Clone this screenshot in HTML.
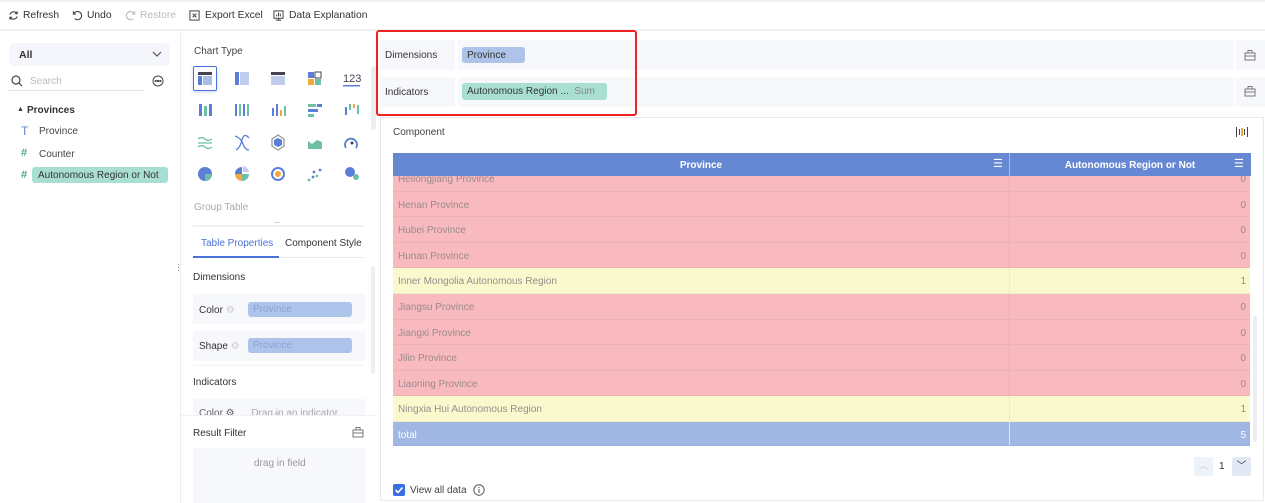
<!DOCTYPE html>
<html><head><meta charset="utf-8"><style>
*{box-sizing:border-box;margin:0;padding:0}
body{width:1265px;height:503px;overflow:hidden;background:#fff;font-family:"Liberation Sans",sans-serif;font-size:10px;color:#333;position:relative}
.a{position:absolute}
.tb span{position:absolute;top:10px;font-size:10.3px;color:#333}
.row{position:absolute;left:393px;width:857px;height:25.6px;border-bottom:1px solid rgba(0,0,0,0.04)}
.row .l{position:absolute;left:5px;top:8px;color:#9a8b8c;font-size:10px}
.row .r{position:absolute;right:4px;top:8px;color:#9a8b8c;font-size:10px}
.row .d{position:absolute;left:616px;top:0;bottom:0;border-left:1px solid rgba(0,0,0,0.05)}
.pk{background:#f8babe}.yl{background:#f9f9cd}
</style></head><body>
<div class="a" style="left:0;top:0;width:1265px;height:2px;background:#f0f1f4"></div>
<div class="a" style="left:0;top:29px;width:1265px;height:2px;background:#f0f1f4"></div>
<div class="tb">
<svg class="a" style="left:8px;top:10px" width="11" height="11" viewBox="0 0 12 12" fill="none" stroke="#444" stroke-width="1.2"><path d="M10 4A4.5 4.5 0 0 0 2 5M2 8a4.5 4.5 0 0 0 8-1"/><path d="M10 1.5V4H7.5M2 10.5V8h2.5"/></svg>
<span style="left:23px">Refresh</span>
<svg class="a" style="left:72px;top:10px" width="11" height="11" viewBox="0 0 12 12" fill="none" stroke="#444" stroke-width="1.2"><path d="M1.5 1.5v3h3M1.8 4.5A4.5 4.5 0 1 1 3 9.5"/></svg>
<span style="left:87px">Undo</span>
<svg class="a" style="left:125px;top:10px" width="11" height="11" viewBox="0 0 12 12" fill="none" stroke="#bbb" stroke-width="1.2"><path d="M10.5 1.5v3h-3M10.2 4.5A4.5 4.5 0 1 0 9 9.5"/></svg>
<span style="left:140px;color:#bbb">Restore</span>
<svg class="a" style="left:189px;top:10px" width="11" height="11" viewBox="0 0 12 12" fill="none" stroke="#444" stroke-width="1.1"><rect x="1" y="1" width="10" height="10"/><path d="M4 4l4 4M8 4l-4 4"/></svg>
<span style="left:205px">Export Excel</span>
<svg class="a" style="left:273px;top:10px" width="11" height="11" viewBox="0 0 12 12" fill="none" stroke="#444" stroke-width="1.1"><rect x="1" y="1" width="10" height="8"/><path d="M4 7V5M6 7V3M8 7V4M6 9v2M3 11h6"/></svg>
<span style="left:289px">Data Explanation</span>
</div>
<div class="a" style="left:180px;top:31px;width:1px;height:472px;background:#ececf0"></div>
<div class="a" style="left:9px;top:43px;width:161px;height:23px;background:#f4f6fb;border-radius:6px"></div>
<div class="a" style="left:19px;top:49px;font-weight:bold;font-size:10.5px">All</div>
<svg class="a" style="left:152px;top:50px" width="10" height="8" viewBox="0 0 10 8" fill="none" stroke="#555" stroke-width="1.2"><path d="M1 2l4 4 4-4"/></svg>
<svg class="a" style="left:11px;top:75px" width="12" height="12" viewBox="0 0 12 12" fill="none" stroke="#444" stroke-width="1.2"><circle cx="5" cy="5" r="4"/><path d="M8 8l3 3"/></svg>
<div class="a" style="left:30px;top:76px;color:#bbb;font-size:10px">Search</div>
<div class="a" style="left:8px;top:90px;width:136px;height:1px;background:#e3e5ea"></div>
<svg class="a" style="left:152px;top:75px" width="12" height="12" viewBox="0 0 12 12" fill="none" stroke="#444" stroke-width="1"><circle cx="6" cy="6" r="5"/><circle cx="3.7" cy="6" r=".6" fill="#444"/><circle cx="6" cy="6" r=".6" fill="#444"/><circle cx="8.3" cy="6" r=".6" fill="#444"/></svg>
<div class="a" style="left:17px;top:106px;font-size:7px;color:#333">&#9650;</div>
<div class="a" style="left:27px;top:105px;font-weight:bold;font-size:10px">Provinces</div>
<div class="a" style="left:21px;top:124px;color:#6687d2;font-size:12px">T</div>
<div class="a" style="left:39px;top:126px;font-size:10px;color:#444">Province</div>
<div class="a" style="left:21px;top:147px;color:#4aaa90;font-size:11px;font-weight:bold">#</div>
<div class="a" style="left:39px;top:149px;font-size:10px;color:#444">Counter</div>
<div class="a" style="left:21px;top:169px;color:#4aaa90;font-size:11px;font-weight:bold">#</div>
<div class="a" style="left:32px;top:167px;width:136px;height:16px;background:#a9dfd3;border-radius:3px"></div>
<div class="a" style="left:38px;top:170px;font-size:10px;color:#333">Autonomous Region or Not</div>
<div class="a" style="left:177px;top:263px;color:#888;font-size:9px;line-height:3px">·<br>·<br>·</div>
<div class="a" style="left:194px;top:46px;font-size:10px;color:#444">Chart Type</div>
<div class="a" style="left:371px;top:66px;width:5px;height:64px;background:#eceef2;border-radius:3px"></div>
<div class="a" style="left:193px;top:66px;width:24px;height:25px;border:1.5px solid #4a72d8;border-radius:2px;box-shadow:0 1px 3px rgba(74,114,216,.3)"></div>
<svg class="a" style="left:193px;top:66px" width="175" height="124" viewBox="193 66 175 124">
<g fill="#5b7fd9">
<rect x="198" y="72" width="14" height="3" fill="#445"/><rect x="198" y="76" width="4" height="9"/><rect x="203" y="76" width="9" height="9" fill="#aabbe8"/>
<rect x="235" y="72" width="4" height="13"/><rect x="240" y="72" width="9" height="13" fill="#c0cdef"/>
<rect x="271" y="72" width="14" height="3" fill="#445"/><rect x="271" y="76" width="14" height="9" fill="#c0cdef"/>
<rect x="308" y="72" width="6" height="6"/><rect x="315" y="72" width="6" height="6" fill="none" stroke="#445"/><rect x="308" y="79" width="6" height="6" fill="#f2a93b"/><rect x="315" y="79" width="6" height="6" fill="#6fbfa6"/>
<text x="343" y="82" font-size="11" fill="#445" font-family="Liberation Sans">123</text><rect x="343" y="85" width="17" height="1.5"/>
<rect x="199" y="104" width="3" height="12"/><rect x="204" y="106" width="3" height="10" fill="#6fbfa6"/><rect x="209" y="104" width="3" height="12"/>
<rect x="235" y="104" width="2" height="12"/><rect x="239" y="104" width="2" height="12" fill="#6fbfa6"/><rect x="243" y="104" width="2" height="12"/><rect x="247" y="104" width="2" height="12" fill="#6fbfa6"/>
<rect x="272" y="108" width="2" height="8"/><rect x="276" y="104" width="2" height="12"/><rect x="280" y="110" width="2" height="6" fill="#f2a93b"/><rect x="284" y="106" width="2" height="10" fill="#6fbfa6"/>
<rect x="308" y="104" width="8" height="3" fill="#6fbfa6"/><rect x="308" y="109" width="10" height="3"/><rect x="308" y="114" width="6" height="3" fill="#6fbfa6"/><rect x="317" y="104" width="5" height="3"/>
<rect x="345" y="107" width="2" height="8"/><rect x="349" y="104" width="2" height="6" fill="#6fbfa6"/><rect x="353" y="104" width="2" height="4" fill="#f2a93b"/><rect x="357" y="105" width="2" height="9" fill="#6fbfa6"/>
</g>
<g fill="none" stroke-width="1.3">
<path d="M198 139q4-3 7 0t7 0M198 143h14M198 147q4-3 7 0t7 0" stroke="#6fbfa6"/>
<path d="M235 136q6 2 8 8t6 6M236 150q4-2 6-10t7-2" stroke="#5b7fd9"/>
<path d="M278 135l6 4v7l-6 4-6-4v-7z" stroke="#999"/><path d="M278 138l4 2v5l-4 2-4-2v-5z" fill="#5b7fd9" stroke="none"/>
<path d="M308 149v-8l4 3 5-4 5 2v7z" fill="#6fbfa6" stroke="none"/>
<path d="M346 148a6 6 0 1 1 10 0" stroke="#5b7fd9" stroke-width="1.8"/><circle cx="352" cy="143" r="1.5" fill="#445" stroke="none"/>
</g>
<g>
<circle cx="205" cy="174" r="7" fill="#5b7fd9"/><path d="M205 174h7a7 7 0 0 1-7 7z" fill="#6fbfa6"/>
<path d="M242 167a7 7 0 0 0-7 7h7z" fill="#5b7fd9"/><path d="M242 174h7a7 7 0 0 1-7 7z" fill="#6fbfa6"/><path d="M242 174v7a7 7 0 0 1-7-7z" fill="#f2a93b"/><path d="M243 166a7 7 0 0 1 6 6h-6z" fill="#c0cdef"/>
<circle cx="278" cy="174" r="6" fill="none" stroke="#5b7fd9" stroke-width="2"/><circle cx="278" cy="174" r="3" fill="#f2a93b"/>
<circle cx="309" cy="180" r="1.4" fill="#6fbfa6"/><circle cx="313" cy="177" r="1.4" fill="#5b7fd9"/><circle cx="317" cy="176" r="1.4" fill="#6fbfa6"/><circle cx="320" cy="170" r="1.4" fill="#5b7fd9"/><circle cx="314" cy="172" r="1.4" fill="#5b7fd9"/>
<circle cx="350" cy="172" r="5" fill="#5b7fd9"/><circle cx="356" cy="177" r="3" fill="#6fbfa6"/>
</g>
</svg>
<div class="a" style="left:194px;top:202px;font-size:10px;color:#aaa">Group Table</div>
<div class="a" style="left:193px;top:225px;width:172px;height:2px;background:#f0f1f4"></div>
<div class="a" style="left:274px;top:218px;color:#888;font-size:8px;letter-spacing:-1px">···</div>
<div class="a" style="left:201px;top:238px;font-size:10px;color:#4a72d8">Table Properties</div>
<div class="a" style="left:285px;top:238px;font-size:10px;color:#333">Component Style</div>
<div class="a" style="left:193px;top:256px;width:86px;height:2px;background:#4a72d8"></div>
<div class="a" style="left:279px;top:257px;width:86px;height:1px;background:#ececf0"></div>
<div class="a" style="left:371px;top:266px;width:4px;height:108px;background:#eceef2;border-radius:3px"></div>
<div class="a" style="left:193px;top:272px;font-size:10px">Dimensions</div>
<div class="a" style="left:193px;top:294px;width:172px;height:30px;background:#f7f8fc"></div>
<div class="a" style="left:199px;top:305px;font-size:10px">Color <span style="color:#ccc">⚙</span></div>
<div class="a" style="left:248px;top:302px;width:104px;height:15px;background:#aec3e9;border-radius:3px;color:#8ea3d6;font-size:10px;padding:2px 5px">Province</div>
<div class="a" style="left:193px;top:331px;width:172px;height:30px;background:#f7f8fc"></div>
<div class="a" style="left:199px;top:341px;font-size:10px">Shape <span style="color:#ccc">⚙</span></div>
<div class="a" style="left:248px;top:338px;width:104px;height:15px;background:#aec3e9;border-radius:3px;color:#8ea3d6;font-size:10px;padding:2px 5px">Province</div>
<div class="a" style="left:193px;top:365px;width:172px;height:1px;background:#f0f1f4"></div>
<div class="a" style="left:193px;top:377px;font-size:10px">Indicators</div>
<div class="a" style="left:193px;top:399px;width:172px;height:16px;background:#f7f8fc"></div>
<div class="a" style="left:199px;top:408px;font-size:10px;color:#666">Color ⚙ &nbsp;&nbsp;&nbsp;&nbsp;&nbsp;<span style="color:#aaa">Drag in an indicator</span></div>
<div class="a" style="left:181px;top:415px;width:196px;height:88px;background:#fff;border-top:1px solid #f0f1f4"></div>
<div class="a" style="left:274px;top:409px;color:#888;font-size:8px;letter-spacing:-1px">···</div>
<div class="a" style="left:193px;top:428px;font-size:10px">Result Filter</div>
<svg class="a" style="left:352px;top:426px" width="12" height="12" viewBox="0 0 12 12" fill="none" stroke="#777" stroke-width="1"><rect x="1" y="4" width="10" height="7"/><path d="M4 4V1.5h4V4M1 7h10"/></svg>
<div class="a" style="left:193px;top:448px;width:172px;height:55px;background:#f7f8fc"></div>
<div class="a" style="left:254px;top:458px;font-size:10px;color:#999">drag in field</div>
<div class="a" style="left:380px;top:40px;width:885px;height:30px;background:#f7f8fc"></div>
<div class="a" style="left:380px;top:77px;width:885px;height:30px;background:#f7f8fc"></div>
<div class="a" style="left:455px;top:40px;width:3px;height:67px;background:#fff"></div>
<div class="a" style="left:1234px;top:40px;width:2px;height:67px;background:#fff"></div>
<div class="a" style="left:385px;top:50px;font-size:10px">Dimensions</div>
<div class="a" style="left:462px;top:47px;width:63px;height:16px;background:#aec3e9;border-radius:3px;font-size:10px;padding:3px 5px;color:#333">Province</div>
<div class="a" style="left:385px;top:87px;font-size:10px">Indicators</div>
<div class="a" style="left:462px;top:83px;width:145px;height:17px;background:#a9dfd3;border-radius:3px;font-size:10px;padding:3px 5px;color:#333">Autonomous Region ... &nbsp;<span style="color:#888">Sum</span></div>
<svg class="a" style="left:1244px;top:49px" width="12" height="12" viewBox="0 0 12 12" fill="none" stroke="#777" stroke-width="1"><rect x="1" y="4" width="10" height="7"/><path d="M4 4V1.5h4V4M1 7h10"/></svg>
<svg class="a" style="left:1244px;top:85px" width="12" height="12" viewBox="0 0 12 12" fill="none" stroke="#777" stroke-width="1"><rect x="1" y="4" width="10" height="7"/><path d="M4 4V1.5h4V4M1 7h10"/></svg>
<div class="a" style="left:376px;top:30px;width:261px;height:86px;border:2px solid #ee2222;border-radius:3px"></div>
<div class="a" style="left:380px;top:117px;width:884px;height:384px;background:#fff;border:1px solid #e8e9ee"></div>
<div class="a" style="left:393px;top:127px;font-size:10px;color:#444">Component</div>
<svg class="a" style="left:1236px;top:127px" width="12" height="10" viewBox="0 0 12 10"><g fill="#445"><rect x="0" y="0" width="1" height="10"/><rect x="11" y="0" width="1" height="10"/><rect x="3" y="2" width="1" height="6"/><rect x="8" y="2" width="1" height="6"/></g><rect x="5" y="1" width="2" height="8" fill="#f2a93b"/></svg>
<div class="row pk" style="top:166px"><span class="l">Heilongjiang Province</span><span class="r">0</span><span class="d"></span></div>
<div class="row pk" style="top:191.6px"><span class="l">Henan Province</span><span class="r">0</span><span class="d"></span></div>
<div class="row pk" style="top:217.2px"><span class="l">Hubei Province</span><span class="r">0</span><span class="d"></span></div>
<div class="row pk" style="top:242.8px"><span class="l">Hunan Province</span><span class="r">0</span><span class="d"></span></div>
<div class="row yl" style="top:268.4px"><span class="l">Inner Mongolia Autonomous Region</span><span class="r">1</span><span class="d"></span></div>
<div class="row pk" style="top:294px"><span class="l">Jiangsu Province</span><span class="r">0</span><span class="d"></span></div>
<div class="row pk" style="top:319.6px"><span class="l">Jiangxi Province</span><span class="r">0</span><span class="d"></span></div>
<div class="row pk" style="top:345.2px"><span class="l">Jilin Province</span><span class="r">0</span><span class="d"></span></div>
<div class="row pk" style="top:370.8px"><span class="l">Liaoning Province</span><span class="r">0</span><span class="d"></span></div>
<div class="row yl" style="top:396.4px"><span class="l">Ningxia Hui Autonomous Region</span><span class="r">1</span><span class="d"></span></div>
<div class="row" style="top:422px;height:24px;background:#a0b6e3"><span class="l" style="color:#fff">total</span><span class="r" style="color:#fff">5</span><span class="d" style="border-color:#dfe6f6"></span></div>
<div class="a" style="left:393px;top:153px;width:858px;height:23px;background:#6687d2"></div>
<div class="a" style="left:1009px;top:153px;width:1px;height:23px;background:#a8bbe6"></div>
<div class="a" style="left:393px;top:160px;width:616px;text-align:center;color:#fff;font-weight:bold;font-size:10px">Province</div>
<div class="a" style="left:1010px;top:160px;width:240px;text-align:center;color:#fff;font-weight:bold;font-size:10px">Autonomous Region or Not</div>
<div class="a" style="left:993px;top:157px;color:#fff;font-size:11px">☰</div>
<div class="a" style="left:1234px;top:157px;color:#fff;font-size:11px">☰</div>
<div class="a" style="left:1253px;top:316px;width:4px;height:126px;background:#eceef2;border-radius:2px"></div>
<div class="a" style="left:1194px;top:457px;width:19px;height:19px;background:#eef2fb;border-radius:2px;color:#ccc;text-align:center;font-size:10px;line-height:19px">︿</div>
<div class="a" style="left:1219px;top:461px;font-size:10px">1</div>
<div class="a" style="left:1232px;top:457px;width:19px;height:19px;background:#e3e8f5;border-radius:2px;color:#334;text-align:center;font-size:10px;line-height:19px">﹀</div>
<div class="a" style="left:393px;top:484px;width:12px;height:12px;background:#3a6fe0;border-radius:2px"></div>
<svg class="a" style="left:393px;top:484px" width="12" height="12" viewBox="0 0 12 12" fill="none" stroke="#fff" stroke-width="1.6"><path d="M2.5 6l2.5 2.5 4.5-5"/></svg>
<div class="a" style="left:410px;top:485px;font-size:10px;color:#444">View all data</div>
<svg class="a" style="left:473px;top:484px" width="12" height="12" viewBox="0 0 12 12" fill="none" stroke="#555" stroke-width="1"><circle cx="6" cy="6" r="5.2"/><path d="M6 5v4M6 3v1"/></svg>
</body></html>
